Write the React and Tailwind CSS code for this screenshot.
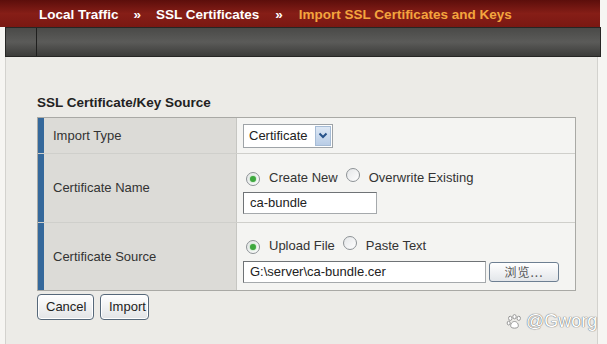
import React from 'react'

function Radio({ checked }) {
  return (
    <span className="inline-flex items-center justify-center w-[14px] h-[14px] rounded-full border border-[#8d9296] bg-gradient-to-br from-[#e4e6e8] to-white shrink-0">
      {checked && <span className="w-[6px] h-[6px] rounded-full bg-[#3ea83e] shadow-[0_0_2px_#7fd07f]" />}
    </span>
  )
}

function TextBox({ value, className }) {
  return (
    <div className={`h-[22px] bg-white border border-[#a5a9ac] border-t-[#6f7376] border-l-[#6f7376] flex items-center pl-[6px] text-[13px] text-[#222] ${className}`}>
      {value}
    </div>
  )
}

function Row({ label, height, last, children }) {
  return (
    <div className={`flex ${height} ${last ? '' : 'border-b border-[#cfcfcb]'}`}>
      <div className="w-[6px] bg-[#35689b]" />
      <div className="w-[193px] bg-[#dcdbd7] border-r border-[#c6c6c2] flex items-center pl-[9px] text-[13px] text-[#333]">
        {label}
      </div>
      <div className="flex-1 bg-[#f4f4f2] pl-[6px]">{children}</div>
    </div>
  )
}

function Button({ children, className }) {
  return (
    <button className={`h-[26px] px-[8px] rounded-[4px] border border-[#56687a] bg-gradient-to-b from-white to-[#e2e4e6] text-[13px] text-[#222] shadow-[inset_0_0_0_1px_#fff] ${className}`}>
      {children}
    </button>
  )
}

export default function App() {
  return (
    <div className="relative w-[607px] h-[344px] overflow-hidden bg-[#f6f5f2] font-['Liberation_Sans',Arial,sans-serif]">
      <div className="w-[600px] h-[27px] bg-gradient-to-b from-[#5c0e0b] via-[#861e17] to-[#7a1812] flex items-center pl-[39px] pt-[4px] text-[13.5px] font-bold text-white whitespace-nowrap">
        <span>Local Traffic</span>
        <span className="mx-[15px]">»</span>
        <span>SSL Certificates</span>
        <span className="mx-[16px]">»</span>
        <span className="text-[#f4a53e]">Import SSL Certificates and Keys</span>
      </div>
      <div className="ml-[5px] w-[596px] h-[30px] flex border border-[#262624] bg-gradient-to-b from-[#4a4a48] via-[#5b5b59] to-[#3c3c3a]">
        <div className="w-[31px] border-r border-[#1f1f1e]" />
      </div>
      <div className="ml-[5px] w-[593px] h-[287px] bg-[#ecebe7] border-l border-r border-[#d3d2ce] pl-[31px] pt-[38px]">
        <div className="text-[13.5px] font-bold text-[#222] leading-[16px] mb-[6px]">SSL Certificate/Key Source</div>
        <div className="w-[539px] border border-[#a9a9a5]">
          <Row label="Import Type" height="h-[36px]">
            <div className="h-full flex items-center">
              <div className="h-[24px] w-[90px] flex items-center justify-between border border-[#9ea3a7] bg-white pl-[5px] pr-[1px] text-[13px] text-[#222]">
                <span>Certificate</span>
                <span className="w-[16px] h-[20px] bg-gradient-to-b from-[#dde8f5] to-[#b9cde6] border border-[#a6bcd6] flex items-center justify-center">
                  <svg width="10" height="7" viewBox="0 0 10 7">
                    <path d="M1.5 1.5 L5 5 L8.5 1.5" fill="none" stroke="#27528a" strokeWidth="2" />
                  </svg>
                </span>
              </div>
            </div>
          </Row>
          <Row label="Certificate Name" height="h-[69px]">
            <div className="pt-[16px]">
              <div className="flex items-center h-[16px] text-[13px] text-[#333]">
                <span className="ml-[3px]"><Radio checked /></span>
                <span className="ml-[9px]">Create New</span>
                <span className="ml-[8px]"><Radio /></span>
                <span className="ml-[9px]">Overwrite Existing</span>
              </div>
              <TextBox value="ca-bundle" className="w-[134px] mt-[6px]" />
            </div>
          </Row>
          <Row label="Certificate Source" height="h-[67px]" last>
            <div className="pt-[15px]">
              <div className="flex items-center h-[16px] text-[13px] text-[#333]">
                <span className="ml-[3px]"><Radio checked /></span>
                <span className="ml-[9px]">Upload File</span>
                <span className="ml-[8px]"><Radio /></span>
                <span className="ml-[9px]">Paste Text</span>
              </div>
              <div className="flex items-center mt-[7px]">
                <TextBox value="G:\server\ca-bundle.cer" className="w-[243px] pl-[2px]" />
                <button className="ml-[3px] h-[20px] w-[70px] rounded-[3px] border border-[#6d7f92] bg-gradient-to-b from-white to-[#e3e6ea] text-[12px] text-[#555] tracking-[1px] font-['Noto_Sans_CJK_SC',sans-serif] leading-none">
                  浏览...
                </button>
              </div>
            </div>
          </Row>
        </div>
        <div className="flex gap-[6px] mt-[3px]">
          <Button className="w-[57px]">Cancel</Button>
          <Button className="w-[49px]">Import</Button>
        </div>
      </div>
      <div className="absolute left-[506px] top-[308px] flex items-center gap-[3px] text-[18px] text-white [text-shadow:0_0_1px_#666,0_0_1px_#666]">
        <svg width="17" height="17" viewBox="0 0 16 16" fill="#fff" stroke="#888" strokeWidth="0.8">
          <ellipse cx="4" cy="5" rx="1.6" ry="2" />
          <ellipse cx="8" cy="3.5" rx="1.6" ry="2" />
          <ellipse cx="12" cy="5" rx="1.6" ry="2" />
          <ellipse cx="2.5" cy="9.5" rx="1.4" ry="1.8" />
          <path d="M8 8 C5 8 3.5 12 5 13.5 C6.5 14.5 9.5 14.5 11 13.5 C12.5 12 11 8 8 8 Z" />
        </svg>
        <span>@Gworg</span>
      </div>
    </div>
  )
}
